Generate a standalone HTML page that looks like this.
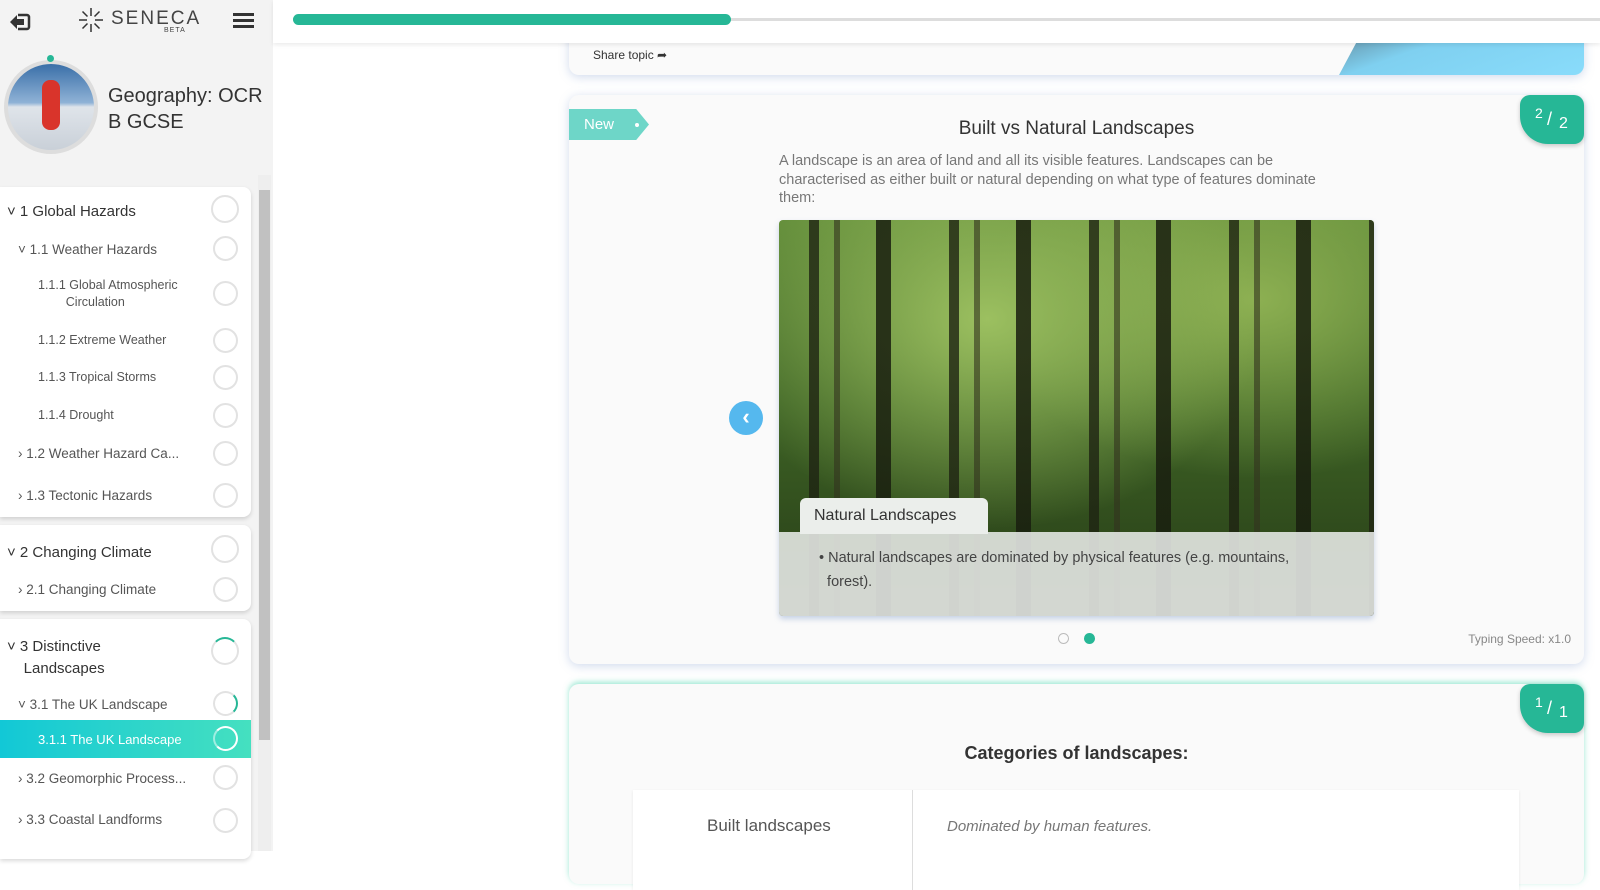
<!DOCTYPE html>
<html><head><meta charset="utf-8"><style>
*{box-sizing:border-box;margin:0;padding:0}
body{width:1600px;height:851px;overflow:hidden;background:#fff;font-family:"Liberation Sans",sans-serif;position:relative;color:#333}
.abs{position:absolute}
#side{left:0;top:0;width:273px;height:851px;background:#f3f3f3}
.card{position:absolute;left:0;width:251px;background:#fff;border-radius:0 8px 8px 0;box-shadow:0 2px 4px rgba(0,0,0,.15)}
.it{position:absolute;font-size:13.5px;color:#555;white-space:nowrap}
.h{font-size:15px;color:#333}
.c{position:absolute;left:213px;width:25px;height:25px;border-radius:50%;border:2px solid #e2e2e2}
.c.b{width:28px;height:28px;left:211px}
.mcard{position:absolute;left:569px;width:1015px;background:#fafafa;border-radius:10px;box-shadow:0 2px 10px rgba(120,150,200,.35)}
.badge{position:absolute;right:0;width:64px;height:49px;background:#26b796;border-radius:10px 10px 10px 28px;color:#fff;font-size:16px;box-shadow:0 2px 5px rgba(0,0,0,.2)}
</style></head><body>
<div id="side" class="abs">
 <svg class="abs" style="left:8px;top:11px" width="24" height="22" viewBox="0 0 24 22"><path d="M10 4H19a2 2 0 0 1 2 2v10a2 2 0 0 1-2 2h-9" fill="none" stroke="#333" stroke-width="2.5"/><path d="M2 11l7-7v4h7v6H9v4z" fill="#333"/></svg>
 <svg class="abs" style="left:77px;top:6px" width="28" height="28" viewBox="0 0 28 28" stroke="#333" stroke-width="1.5"><path d="M14 2v8M14 18v8M2 14h8M18 14h8M5.5 5.5l5 5M17.5 17.5l5 5M5.5 22.5l5-5M17.5 10.5l5-5"/></svg>
 <div class="abs" style="left:111px;top:8px;font-size:19px;letter-spacing:2px;color:#444">SENECA</div>
 <div class="abs" style="left:164px;top:27px;font-size:7px;letter-spacing:1px;color:#444">BETA</div>
 <div class="abs" style="left:233px;top:13px;width:21px;height:3px;background:#333;box-shadow:0 6px 0 #333,0 12px 0 #333"></div>
 <div class="abs" style="left:4px;top:60px;width:94px;height:94px;border-radius:50%;border:4px solid #ddd;background:linear-gradient(#3a6fa8 0,#8fb2d6 45%,#dfe4ea 50%,#c9d0d8 100%)"></div>
 <div class="abs" style="left:42px;top:80px;width:18px;height:50px;border-radius:8px;background:#d9342b"></div>
 <div class="abs" style="left:47px;top:55px;width:7px;height:7px;border-radius:50%;background:#26b796"></div>
 <div class="abs" style="left:108px;top:83px;font-size:20px;color:#333;line-height:26px">Geography: OCR<br>B GCSE</div>
 <div class="abs" style="left:258px;top:175px;width:13px;height:676px;background:#eee"></div>
 <div class="abs" style="left:259px;top:190px;width:11px;height:550px;background:#c1c1c1"></div>
 <div class="card" style="top:187px;height:330px">
  <div class="it h" style="left:7px;top:16px">˅ 1 Global Hazards</div><div class="c b" style="top:8px"></div>
  <div class="it" style="left:18px;top:55px">˅ 1.1 Weather Hazards</div><div class="c" style="top:49px"></div>
  <div class="it" style="left:38px;top:90px;font-size:12.5px;line-height:17px;white-space:normal;width:160px">1.1.1 Global Atmospheric<br>&nbsp;&nbsp;&nbsp;&nbsp;&nbsp;&nbsp;&nbsp;&nbsp;Circulation</div><div class="c" style="top:94px"></div>
  <div class="it" style="left:38px;top:146px;font-size:12.5px">1.1.2 Extreme Weather</div><div class="c" style="top:141px"></div>
  <div class="it" style="left:38px;top:183px;font-size:12.5px">1.1.3 Tropical Storms</div><div class="c" style="top:178px"></div>
  <div class="it" style="left:38px;top:221px;font-size:12.5px">1.1.4 Drought</div><div class="c" style="top:216px"></div>
  <div class="it" style="left:18px;top:259px">› 1.2 Weather Hazard Ca...</div><div class="c" style="top:254px"></div>
  <div class="it" style="left:18px;top:301px">› 1.3 Tectonic Hazards</div><div class="c" style="top:296px"></div>
 </div>
 <div class="card" style="top:525px;height:86px">
  <div class="it h" style="left:7px;top:19px">˅ 2 Changing Climate</div><div class="c b" style="top:10px"></div>
  <div class="it" style="left:18px;top:57px">› 2.1 Changing Climate</div><div class="c" style="top:52px"></div>
 </div>
 <div class="card" style="top:619px;height:240px">
  <div class="it h" style="left:7px;top:17px;line-height:22px">˅ 3 Distinctive<br>&nbsp;&nbsp;&nbsp;&nbsp;Landscapes</div><div class="c b" style="top:18px;border-top-color:#26b796"></div>
  <div class="it" style="left:18px;top:78px">˅ 3.1 The UK Landscape</div><div class="c" style="top:72px;border-right-color:#26b796"></div>
  <div class="abs" style="left:0;top:101px;width:251px;height:38px;background:linear-gradient(90deg,#12c8d6,#45e0c0)"></div>
  <div class="it" style="left:38px;top:113px;font-size:13px;color:#fff">3.1.1 The UK Landscape</div><div class="c" style="top:107px;border-color:#fff #fff #fff rgba(255,255,255,.5)"></div>
  <div class="it" style="left:18px;top:152px">› 3.2 Geomorphic Process...</div><div class="c" style="top:146px"></div>
  <div class="it" style="left:18px;top:193px">› 3.3 Coastal Landforms</div><div class="c" style="top:189px"></div>
 </div>
</div>
<div class="abs" style="left:273px;top:0;width:1327px;height:43px;background:#fff;box-shadow:0 2px 4px rgba(0,0,0,.08);z-index:2">
 <div class="abs" style="left:20px;top:18px;width:1307px;height:3px;background:#ddd"></div>
 <div class="abs" style="left:20px;top:14px;width:438px;height:11px;border-radius:6px;background:#26b796"></div>
</div>
<div class="mcard" style="top:20px;height:55px">
 <div class="abs" style="left:24px;top:28px;font-size:12px;color:#333">Share topic ➦</div>
 <div class="abs" style="right:0;top:0;width:245px;height:55px;background:linear-gradient(160deg,#5a7a8a,#7fd0f0 40%,#89dcfb);clip-path:polygon(12% 0,100% 0,100% 100%,0 100%);border-radius:0 0 10px 0"></div>
</div>
<div class="mcard" style="top:95px;height:569px">
 <div class="abs" style="left:0;top:14px;width:80px;height:31px;background:#6ed6c8;clip-path:polygon(0 0,84% 0,100% 50%,84% 100%,0 100%);color:#fff;font-size:15px;line-height:31px;padding-left:15px">New</div>
 <div class="abs" style="left:66px;top:28px;width:4px;height:4px;border-radius:50%;background:#fff"></div>
 <div class="abs" style="left:0;width:1015px;top:23px;text-align:center;font-size:19px;color:#333">Built vs Natural Landscapes</div>
 <div class="badge" style="top:0"><span class="abs" style="left:15px;top:10px;font-size:14px">2</span><span class="abs" style="left:27px;top:14px;font-size:18px">/</span><span class="abs" style="left:39px;top:20px">2</span></div>
 <div class="abs" style="left:210px;top:57px;width:560px;font-size:14.5px;line-height:18.5px;color:#777">A landscape is an area of land and all its visible features. Landscapes can be characterised as either built or natural depending on what type of features dominate them:</div>
 <div class="abs" style="left:210px;top:125px;width:595px;height:396px;border-radius:4px;overflow:hidden;box-shadow:0 3px 6px rgba(120,150,200,.4)">
  <div class="abs" style="left:0;top:0;width:595px;height:396px;background:
   repeating-linear-gradient(90deg,transparent 0 30px,rgba(30,35,18,.8) 30px 40px,transparent 40px 55px,rgba(50,50,30,.6) 55px 61px,transparent 61px 97px,rgba(25,30,15,.85) 97px 112px,transparent 112px 140px),
   radial-gradient(ellipse at 35% 25%,#9cc060,transparent 50%),
   radial-gradient(ellipse at 80% 20%,#8db052,transparent 40%),
   linear-gradient(#5f8a38,#3f6526 45%,#2f4a1c 80%,#3d4a2e)"></div>
  <div class="abs" style="left:0;top:312px;width:595px;height:84px;background:rgba(232,235,232,.88)"></div>
  <div class="abs" style="left:21px;top:278px;width:188px;height:36px;background:#ebeeeb;border-radius:6px 6px 0 0;font-size:16px;color:#333;padding:9px 0 0 14px">Natural Landscapes</div>
  <div class="abs" style="left:24px;top:326px;width:560px;font-size:14.5px;line-height:24px;color:#444;padding-left:16px">• Natural landscapes are dominated by physical features (e.g. mountains, <br>&nbsp;&nbsp;forest).</div>
 </div>
 <div class="abs" style="left:160px;top:306px;width:34px;height:34px;border-radius:50%;background:#55b8ee;color:#fff;font-size:22px;font-weight:bold;text-align:center;line-height:32px">‹</div>
 <div class="abs" style="left:489px;top:538px;width:11px;height:11px;border-radius:50%;border:1px solid #bbb"></div>
 <div class="abs" style="left:515px;top:538px;width:11px;height:11px;border-radius:50%;background:#26b796"></div>
 <div class="abs" style="right:13px;top:537px;font-size:12px;color:#888">Typing Speed: x1.0</div>
</div>
<div class="mcard" style="top:684px;height:200px;box-shadow:0 -2px 6px rgba(60,210,170,.5)">
 <div class="badge" style="top:0"><span class="abs" style="left:15px;top:10px;font-size:14px">1</span><span class="abs" style="left:27px;top:14px;font-size:18px">/</span><span class="abs" style="left:39px;top:20px">1</span></div>
 <div class="abs" style="left:0;width:1015px;top:59px;text-align:center;font-size:18px;color:#333;font-weight:bold">Categories of landscapes:</div>
 <div class="abs" style="left:64px;top:106px;width:886px;height:100px;background:#fff;box-shadow:0 1px 3px rgba(0,0,0,.08)">
  <div class="abs" style="left:279px;top:0;width:1px;height:100px;background:#ddd"></div>
  <div class="abs" style="left:74px;top:26px;font-size:17px;color:#555">Built landscapes</div>
  <div class="abs" style="left:314px;top:28px;font-size:15px;color:#777;font-style:italic">Dominated by human features.</div>
 </div>
</div>
</body></html>
